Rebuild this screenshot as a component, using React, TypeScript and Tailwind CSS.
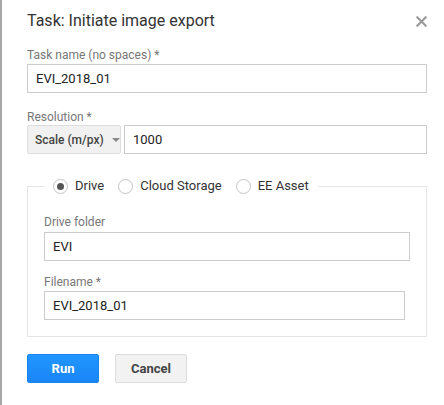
import { X } from 'lucide-react';

const Radio = ({ label, checked }: { label: string; checked?: boolean }) => (
  <label className="flex items-center gap-[7px]">
    <span className="flex h-[15px] w-[15px] items-center justify-center rounded-full border border-[#c4c4c4] bg-white">
      {checked && <span className="h-[7px] w-[7px] rounded-full bg-[#555]" />}
    </span>
    <span>{label}</span>
  </label>
);

export default function App() {
  return (
    <div
      className="h-[405px] w-[444px] overflow-hidden border-l-2 border-[#a8a8a8] bg-white pl-[25px] pr-[17px] pt-[9px] text-[13px] text-[#333]"
      style={{ fontFamily: 'Roboto, "Liberation Sans", sans-serif' }}
    >
      {/* Header */}
      <div className="flex h-[24px] items-center justify-between">
        <h1 className="text-[16px] leading-[24px] text-[#333]">Task: Initiate image export</h1>
        <X className="mr-[-3px] h-[17px] w-[17px] text-[#999]" strokeWidth={3} />
      </div>

      {/* Task name */}
      <div className="mt-[14px] text-[12px] leading-[16px] text-[#777]">Task name (no spaces) *</div>
      <div className="mt-[1px] flex h-[29px] items-center border border-[#ccc] px-[8px] text-[#222]">EVI_2018_01</div>

      {/* Resolution */}
      <div className="mt-[16px] text-[12px] leading-[16px] text-[#777]">Resolution *</div>
      <div className="flex gap-[3px]">
        <div className="flex h-[29px] w-[94px] items-center gap-[8px] whitespace-nowrap rounded-[2px] border border-[#ddd] bg-[#f1f1f1] pl-[7px] text-[12px] font-medium text-[#444]">
          <span>Scale (m/px)</span>
          <span className="h-0 w-0 border-x-[4px] border-t-[4px] border-x-transparent border-t-[#888]" />
        </div>
        <div className="flex h-[29px] flex-1 items-center border border-[#ccc] px-[8px] text-[#222]">1000</div>
      </div>

      {/* Destination */}
      <fieldset className="mt-[22px] border border-[#e5e5e5] px-[16px] pb-[16px]">
        <legend className="flex h-[20px] items-center gap-[14px] px-[9px] text-[13px] text-[#333]">
          <Radio label="Drive" checked />
          <Radio label="Cloud Storage" />
          <Radio label="EE Asset" />
        </legend>
        <div className="mt-[18px] text-[12px] leading-[16px] text-[#777]">Drive folder</div>
        <div className="mt-[2px] flex h-[29px] w-[366px] items-center border border-[#ccc] px-[8px] text-[#222]">EVI</div>
        <div className="mt-[13px] text-[12px] leading-[16px] text-[#777]">Filename *</div>
        <div className="mt-[1px] flex h-[29px] w-[361px] items-center border border-[#ccc] px-[8px] text-[#222]">EVI_2018_01</div>
      </fieldset>

      {/* Actions */}
      <div className="mt-[17px] flex gap-[16px]">
        <button className="h-[29px] w-[72px] rounded-[2px] border border-[#1a84f0] bg-gradient-to-b from-[#2196ff] to-[#1a86f6] font-bold text-white">Run</button>
        <button className="h-[29px] w-[72px] rounded-[2px] border border-[#dcdcdc] bg-[#f2f2f2] font-bold text-[#444]">Cancel</button>
      </div>
    </div>
  );
}
